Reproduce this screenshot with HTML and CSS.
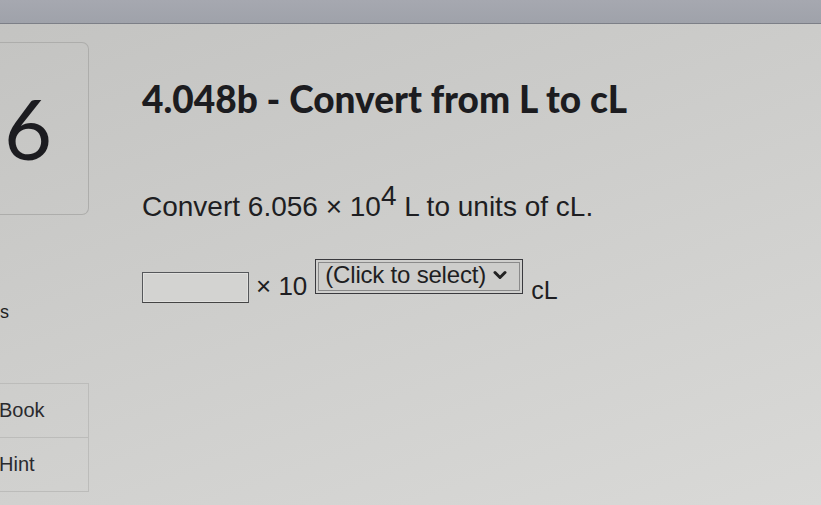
FILE: index.html
```html
<!DOCTYPE html>
<html>
<head>
<meta charset="utf-8">
<link rel="stylesheet" href="styles.css">
</head>
<body>
<div class="topbar"></div>
<div class="page">
  <aside class="side">
    <div class="qnum">6</div>
    <div class="side-label">s</div>
    <nav class="tools">
      <div class="tool">Book</div>
      <div class="tool">Hint</div>
    </nav>
  </aside>
  <main class="main">
    <h1 class="title">4.048b - Convert from L to cL</h1>
    <p class="prompt">Convert 6.056 × 10<span class="sup">4</span> L to units of cL.</p>
    <div class="answer">
      <span class="input"></span>
      <span class="times">× 10</span>
      <span class="select"><span class="select-text">(Click to select)</span><svg class="chev" width="14" height="10" viewBox="0 0 14 10"><path d="M2 2.5 L7 7.5 L12 2.5" fill="none" stroke="#222" stroke-width="3" stroke-linecap="round" stroke-linejoin="round"/></svg></span>
      <span class="unit">cL</span>
    </div>
  </main>
</div>
</body>
</html>
```
FILE: styles.css
```css
html, body {
  margin: 0;
  padding: 0;
  height: 100%;
  overflow: hidden;
}
body {
  background: linear-gradient(160deg, #c3c3c1 0%, #cdcdcb 45%, #d9d9d7 100%);
  font-family: "Liberation Sans", Arial, sans-serif;
  color: #1e1e22;
}
.topbar {
  height: 23px;
  background: linear-gradient(180deg, #a6a8b0, #9fa2aa);
  border-bottom: 1px solid #7c7f87;
}
.page {
  display: flex;
}
.side {
  width: 99px;
  margin-left: -10px;
  flex: none;
}
.qnum {
  margin-top: 18px;
  height: 171px;
  border: 1px solid #adadab;
  border-left: none;
  border-radius: 0 7px 7px 0;
  display: flex;
  align-items: center;
  padding-left: 14px;
  font-family: "Lato", sans-serif;
  font-weight: 400;
  font-size: 83px;
  line-height: 1;
  color: #1c1c20;
}
.side-label {
  margin-top: 85px;
  padding-left: 10px;
  font-size: 18px;
  line-height: 24px;
  height: 24px;
}
.tools {
  margin-top: 59px;
  width: 98px;
  border-top: 1px solid #bcbcba;
  border-right: 1px solid #bcbcba;
}
.tool {
  height: 53px;
  border-bottom: 1px solid #bcbcba;
  padding-left: 9px;
  font-size: 20px;
  line-height: 52px;
  color: #2a2a2e;
}
.main {
  padding-left: 53px;
  flex: 1;
}
.title {
  margin: 53px 0 0;
  font-family: "Lato", sans-serif;
  font-weight: 900;
  font-size: 37px;
  line-height: 44px;
  letter-spacing: 0;
  color: #1c1c20;
}
.prompt {
  margin: 69px 0 0;
  font-size: 28px;
  line-height: 34px;
  color: #1e1e22;
}
.sup {
  position: relative;
  top: -11px;
}
.answer {
  margin-top: 35px;
  display: flex;
  align-items: flex-start;
  font-size: 26px;
}
.input {
  margin-top: 13px;
  width: 105px;
  height: 29px;
  border: 1px solid #55575a;
  border-bottom-color: #444;
  background: #d3d3d1;
  box-shadow: inset 0 0 0 1px #e0e0de;
}
.times {
  margin-top: 12px;
  margin-left: 7px;
  line-height: 30px;
}
.select {
  margin-left: 8px;
  height: 33px;
  width: 197px;
  border: 1px solid #3a3a3e;
  box-shadow: inset 0 0 0 2px #cfcfcd, inset 0 0 0 3px #8a8a8a;
  display: flex;
  align-items: center;
  padding-left: 9px;
  box-sizing: content-box;
  background: #cdcdcb;
}
.select-text {
  font-size: 24px;
  line-height: 28px;
  margin-top: -4px;
  letter-spacing: -0.2px;
}
.chev {
  margin-left: 7px;
  margin-top: -4px;
}
.unit {
  margin-left: 8px;
  margin-top: 17px;
  font-size: 25px;
  line-height: 28px;
}
```
